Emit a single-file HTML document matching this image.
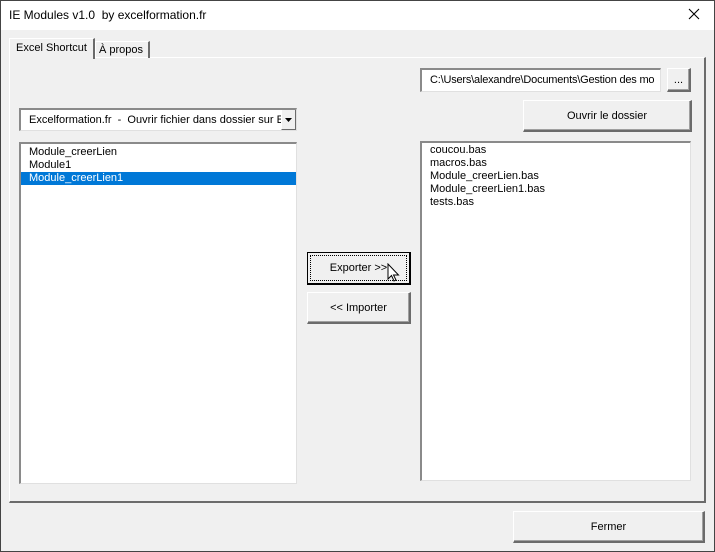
<!DOCTYPE html>
<html><head><meta charset="utf-8"><style>
*{box-sizing:border-box;margin:0;padding:0}
body{width:715px;height:552px;background:#f0f0f0;font-family:"Liberation Sans",sans-serif;font-size:11px;color:#000;position:relative;overflow:hidden}
.a{position:absolute}
.title{left:0;top:0;width:715px;height:30px;background:#fff}
.btn{position:absolute;background:#f0f0f0;border-top:1px solid #fff;border-left:1px solid #fff;border-right:2px solid #6b6b6b;border-bottom:2px solid #6b6b6b;display:flex;align-items:center;justify-content:center;box-shadow:inset -1px -1px 0 #a0a0a0}
.sunk{position:absolute;background:#fff;border-top:2px solid #8a8a8a;border-left:2px solid #8a8a8a;border-right:1px solid #e0e0e0;border-bottom:1px solid #e0e0e0}
.list div{height:13px;line-height:13px;padding-left:8px;white-space:nowrap}
</style></head><body>
<div class="a title"><span class="a" style="left:9px;top:8px;font-size:12px">IE Modules v1.0&nbsp; by excelformation.fr</span>
<svg class="a" style="left:688px;top:8px" width="12" height="12"><path d="M1 1L11 11M11 1L1 11" stroke="#000" stroke-width="1.1"/></svg></div>
<div class="a" style="left:0;top:0;width:715px;height:552px;border:1px solid #444;pointer-events:none;z-index:5"></div>
<div class="a" style="left:9px;top:57px;width:697px;height:446px;border-top:1px solid #fff;border-left:1px solid #fff;border-right:2px solid #6b6b6b;border-bottom:2px solid #6b6b6b"></div>
<div class="a" style="left:95px;top:41px;width:55px;height:17px;border-top:1px solid #fff;border-left:1px solid #fff;border-right:2px solid #6b6b6b;padding:2px 0 0 3px">À propos</div>
<div class="a" style="left:9px;top:38px;width:86px;height:21px;background:#f0f0f0;border-top:1px solid #fff;border-left:1px solid #fff;border-right:2px solid #6b6b6b;padding:3px 0 0 6px">Excel Shortcut</div>
<div class="sunk" style="left:420px;top:68px;width:241px;height:24px;overflow:hidden"><span class="a" style="left:8px;top:4px;white-space:nowrap;letter-spacing:-0.2px">C:\Users\alexandre\Documents\Gestion des mo</span></div>
<div class="btn" style="left:667px;top:68px;width:24px;height:24px">...</div>
<div class="btn" style="left:523px;top:100px;width:169px;height:32px">Ouvrir le dossier</div>
<div class="sunk" style="left:19px;top:108px;width:278px;height:23px;overflow:hidden"><span class="a" style="left:8px;top:4px;white-space:nowrap">Excelformation.fr &nbsp;- &nbsp;Ouvrir fichier dans dossier sur E:</span>
<div class="a" style="right:0;top:0;width:15px;height:20px;background:#f0f0f0;border-left:1px solid #fff;border-right:1px solid #6b6b6b;border-bottom:1px solid #6b6b6b"><svg width="13" height="18"><path d="M3 8h7l-3.5 4z" fill="#000"/></svg></div></div>
<div class="sunk list" style="left:19px;top:142px;width:278px;height:342px;padding-top:2px">
<div>Module_creerLien</div><div>Module1</div><div style="background:#0078d7;color:#fff">Module_creerLien1</div></div>
<div class="sunk list" style="left:420px;top:141px;width:271px;height:340px;padding-top:1px">
<div>coucou.bas</div><div>macros.bas</div><div>Module_creerLien.bas</div><div>Module_creerLien1.bas</div><div>tests.bas</div></div>
<div class="a" style="left:307px;top:252px;width:104px;height:33px;border:1px solid #000;border-right-width:2px;border-bottom-width:2px;background:#f0f0f0">
<div class="a" style="left:2px;top:2px;right:2px;bottom:2px;border:1px dotted #000;display:flex;align-items:center;justify-content:center">Exporter &gt;&gt;</div>
<svg class="a" style="left:79px;top:10px" width="14" height="20"><path d="M1 1v15l3.5-3.5 2.5 5.5 2-1-2.5-5h5z" fill="#fff" stroke="#000" stroke-width="1"/></svg></div>
<div class="btn" style="left:307px;top:292px;width:104px;height:32px">&lt;&lt; Importer</div>
<div class="btn" style="left:513px;top:511px;width:192px;height:32px">Fermer</div>
</body></html>
